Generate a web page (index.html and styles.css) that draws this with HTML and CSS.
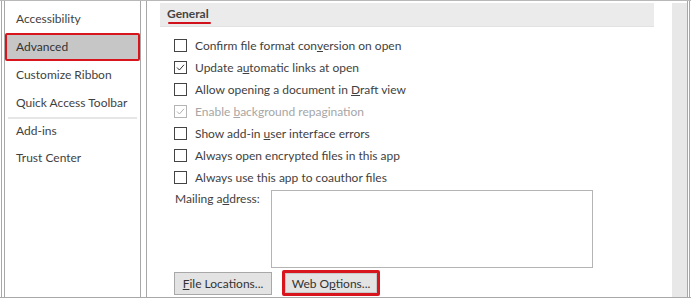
FILE: index.html
```html
<!DOCTYPE html>
<html>
<head>
<meta charset="utf-8">
<link rel="stylesheet" href="styles.css">
</head>
<body>
<div class="window">
  <div class="edge"></div>
  <nav class="sidebar">
    <div class="nav-item">Accessibility</div>
    <div class="nav-item active">Advanced</div>
    <div class="nav-item">Customize Ribbon</div>
    <div class="nav-item">Quick Access Toolbar</div>
    <div class="nav-sep"></div>
    <div class="nav-item">Add-ins</div>
    <div class="nav-item">Trust Center</div>
  </nav>
  <main class="content">
    <div class="scroll-area">
      <div class="section-head"><span class="section-title">General</span></div>
      <div class="options">
        <div class="opt"><span class="box"></span><span>Confirm file format con<u>v</u>ersion on open</span></div>
        <div class="opt"><span class="box checked"><svg viewBox="0 0 13 13" width="13" height="13"><path d="M3 6.5 L5.4 9 L10 3.8" fill="none" stroke="#333" stroke-width="1"/></svg></span><span>Update a<u>u</u>tomatic links at open</span></div>
        <div class="opt"><span class="box"></span><span>Allow opening a document in <u>D</u>raft view</span></div>
        <div class="opt disabled"><span class="box checked"><svg viewBox="0 0 13 13" width="13" height="13"><path d="M3 6.5 L5.4 9 L10 3.8" fill="none" stroke="#b0b0b0" stroke-width="1"/></svg></span><span>Enable <u>b</u>ackground repagination</span></div>
        <div class="opt"><span class="box"></span><span>Show add-in <u>u</u>ser interface errors</span></div>
        <div class="opt"><span class="box"></span><span>Always open encrypted files in this app</span></div>
        <div class="opt"><span class="box"></span><span>Always use this app to coauthor files</span></div>
        <div class="mail-row">
          <span class="mail-label">Mailing a<u>d</u>dress:</span>
          <div class="mail-box"></div>
        </div>
        <div class="buttons">
          <button class="btn"><u>F</u>ile Locations...</button>
          <div class="highlight"><button class="btn">Web O<u>p</u>tions...</button></div>
        </div>
      </div>
    </div>
    <div class="scrollbar"></div>
  </main>
  <div class="outer-right"></div>
</div>
</body>
</html>
```

FILE: styles.css
```css
html, body {
  margin: 0;
  padding: 0;
  background: #fff;
}
body {
  width: 691px;
  height: 298px;
  overflow: hidden;
  font-family: "Lato", "Noto Sans", sans-serif;
  font-size: 12px;
  color: #3f3f3f;
}
.window {
  display: flex;
  border-bottom: 1px solid #a8a8a8;
  border-top: 1px solid #b8b8b8;
  box-sizing: border-box;
  height: 298px;
}
.edge {
  margin-left: 1px;
  width: 2px;
  border-left: 1px solid #a8a8a8;
}
.sidebar {
  width: 135px;
  border-left: 1px solid #a8a8a8;
  border-right: 1px solid #a8a8a8;
  display: flex;
  flex-direction: column;
  padding-top: 4px;
}
.nav-item {
  height: 28px;
  line-height: 28px;
  padding-left: 11px;
  white-space: nowrap;
}
.nav-item.active {
  height: 28px;
  line-height: 24px;
  box-sizing: border-box;
  background: #c6c6c6;
  border: 2px solid #d8141c;
  border-radius: 2px;
  padding-left: 9px;
  color: #333;
}
.nav-sep {
  height: 2px;
  background: #e6e6e6;
  margin: 0 3px -2px 3px;
}
.nav-sep + .nav-item {
  height: 27px;
  line-height: 28px;
}
.content {
  margin-left: 5px;
  flex: 1;
  display: flex;
  border-left: 1px solid #a8a8a8;
  border-right: 1px solid #a8a8a8;
}
.scroll-area {
  flex: 1;
  padding-left: 13px;
  padding-top: 2px;
}
.section-head {
  width: 494px;
  height: 24px;
  background: #ebebeb;
  box-sizing: border-box;
  padding-left: 7px;
  border-bottom: 1px solid #e2e2e2;
}
.section-title {
  display: inline-block;
  line-height: 21px;
  color: #444;
  font-weight: 700;
  font-size: 12px;
  position: relative;
}
.section-title::after {
  content: "";
  position: absolute;
  left: 1px;
  right: -2px;
  bottom: 0;
  height: 2px;
  border-radius: 1px;
  background: #d0101a;
}
.options {
  padding-left: 14px;
  padding-top: 7px;
}
.opt {
  display: flex;
  align-items: center;
  height: 22px;
  gap: 8px;
  white-space: nowrap;
}
.opt.disabled {
  color: #a6a6a6;
}
.box {
  width: 13px;
  height: 13px;
  box-sizing: border-box;
  border: 1px solid #444;
  flex: none;
  position: relative;
}
.box svg {
  position: absolute;
  left: -1px;
  top: -1px;
}
.opt.disabled .box {
  border-color: #b4b4b4;
}
.mail-row {
  display: flex;
  margin-top: 2px;
}
.mail-label {
  padding-left: 1px;
  width: 96px;
  line-height: 16px;
  padding-top: 1px;
  white-space: nowrap;
}
.mail-box {
  width: 322px;
  height: 78px;
  border: 1px solid #b4b4b4;
  box-sizing: border-box;
}
.buttons {
  display: flex;
  align-items: center;
  gap: 10px;
  margin-top: 2px;
}
.btn {
  font-family: inherit;
  font-size: 12px;
  color: #333;
  background: #e3e3e3;
  border: 1px solid #a8a8a8;
  height: 23px;
  padding: 0;
  margin: 0;
  box-sizing: border-box;
  white-space: nowrap;
}
.buttons > .btn {
  width: 98px;
}
.highlight {
  border: 3px solid #d8141c;
  border-radius: 2px;
  display: flex;
}
.highlight .btn {
  width: 92px;
  height: 20px;
  border-color: #c8c8c8;
}
.scrollbar {
  width: 15px;
  background: #e8e8e8;
  margin-top: 2px;
}
.outer-right {
  width: 1px;
  margin-left: 1px;
  border-left: 1px solid #a8a8a8;
}
```
